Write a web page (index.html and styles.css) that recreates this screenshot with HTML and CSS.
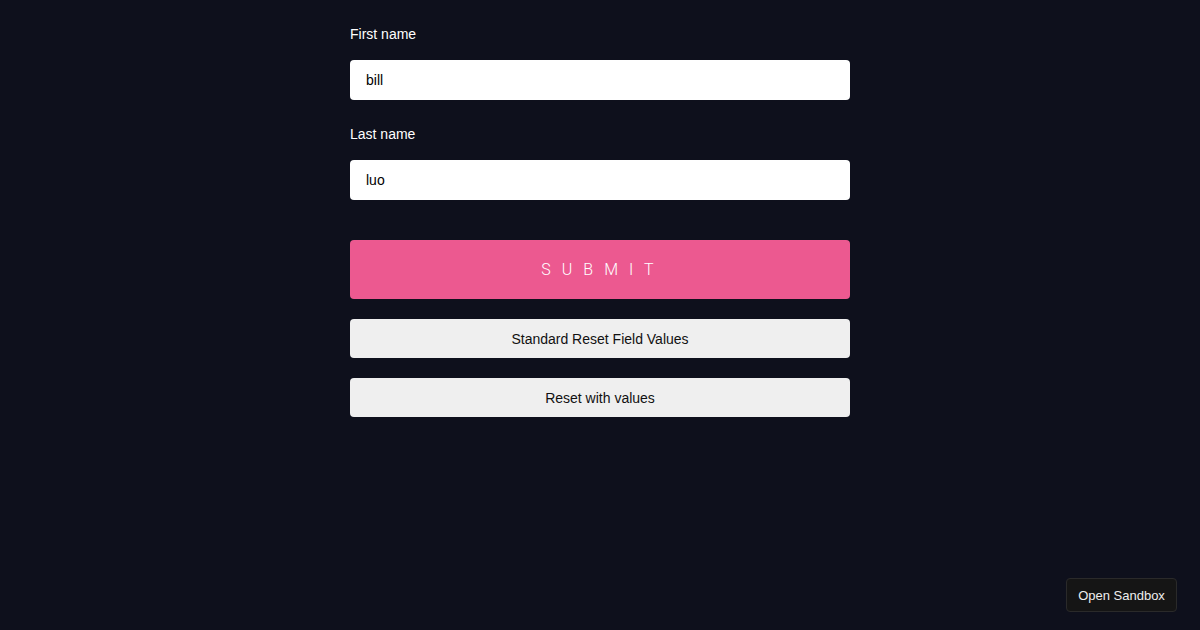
FILE: index.html
```html
<!DOCTYPE html>
<html>
<head>
<meta charset="utf-8">
<link rel="stylesheet" href="styles.css">
</head>
<body>
<form class="form">
  <label class="label">First name</label>
  <input class="field" value="bill">
  <label class="label">Last name</label>
  <input class="field" value="luo">
  <button type="button" class="submit">Submit</button>
  <button type="button" class="reset">Standard Reset Field Values</button>
  <button type="button" class="reset">Reset with values</button>
</form>
<button type="button" class="sandbox">Open Sandbox</button>
</body>
</html>
```
FILE: styles.css
```css
html, body {
  margin: 0;
  background: #0e101c;
  height: 100%;
  font-family: "Liberation Sans", Arial, sans-serif;
}
.form {
  width: 500px;
  margin: 0 auto;
  padding-top: 24px;
  display: flex;
  flex-direction: column;
}
.label {
  display: block;
  color: #fff;
  font-size: 14px;
  line-height: 20px;
  height: 20px;
  margin-bottom: 16px;
}
.field {
  box-sizing: border-box;
  height: 40px;
  border: 0;
  border-radius: 4px;
  background: #fff;
  padding: 0 16px;
  font-size: 14px;
  font-family: "Liberation Sans", Arial, sans-serif;
  color: #000;
  margin: 0 0 24px 0;
  outline: none;
}
.submit {
  margin-top: 16px;
  height: 59px;
  border: 0;
  border-radius: 4px;
  background: #ec5990;
  color: #fff;
  text-transform: uppercase;
  letter-spacing: 11px;
  text-indent: 6px;
  font-size: 16px;
  font-weight: 300;
  font-family: Roboto, "Liberation Sans", Arial, sans-serif;
}
.reset {
  margin-top: 20px;
  height: 39px;
  border: 0;
  border-radius: 4px;
  background: #efefef;
  color: #111;
  font-size: 14px;
  font-family: "Liberation Sans", Arial, sans-serif;
}
.sandbox {
  position: fixed;
  right: 23px;
  bottom: 18px;
  width: 111px;
  height: 34px;
  box-sizing: border-box;
  background: #151515;
  border: 1px solid #2a2a2a;
  border-radius: 4px;
  color: #eee;
  font-size: 13px;
  font-family: "Liberation Sans", Arial, sans-serif;
}
```
